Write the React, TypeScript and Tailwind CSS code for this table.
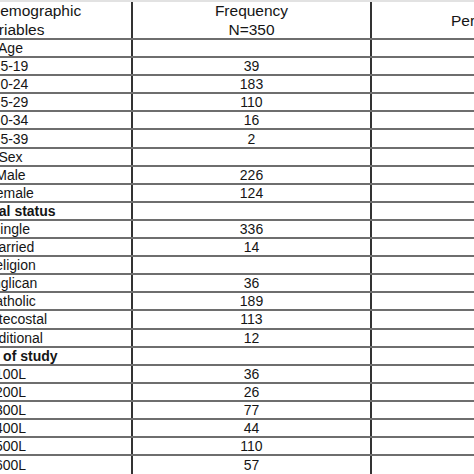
const rows: { label: string; freq?: string; bold?: boolean }[] = [
  { label: "Age" },
  { label: "15-19", freq: "39" },
  { label: "20-24", freq: "183" },
  { label: "25-29", freq: "110" },
  { label: "30-34", freq: "16" },
  { label: "35-39", freq: "2" },
  { label: "Sex" },
  { label: "Male", freq: "226" },
  { label: "Female", freq: "124" },
  { label: "Marital status", bold: true },
  { label: "Single", freq: "336" },
  { label: "Married", freq: "14" },
  { label: "Religion" },
  { label: "Anglican", freq: "36" },
  { label: "Catholic", freq: "189" },
  { label: "Pentecostal", freq: "113" },
  { label: "Traditional", freq: "12" },
  { label: "Level of study", bold: true },
  { label: "100L", freq: "36" },
  { label: "200L", freq: "26" },
  { label: "300L", freq: "77" },
  { label: "400L", freq: "44" },
  { label: "500L", freq: "110" },
  { label: "600L", freq: "57" },
];

export default function App() {
  return (
    <div
      className="w-[474px] h-[474px] overflow-hidden bg-white text-[#151515]"
      style={{ fontFamily: '"Liberation Sans", Arial, sans-serif' }}
    >
      {/* header */}
      <div className="flex h-[40px] border-t-2 border-b-2 border-t-[#e2e2e2] border-b-[#6e6e6e] text-[15.5px] leading-[19px]">
        <div className="ml-[-110px] w-[243px] shrink-0 border-r-2 border-[#333] pl-[99px] flex flex-col justify-center whitespace-nowrap">
          <span>Demographic</span>
          <span className="ml-[-8px]">Variables</span>
        </div>
        <div className="w-[239px] shrink-0 border-r-2 border-[#333] flex flex-col justify-center items-center">
          <span>Frequency</span>
          <span>N=350</span>
        </div>
        <div className="flex-1 flex items-center pl-[79px] whitespace-nowrap">Percentage (%)</div>
      </div>

      {rows.map((r, i) => (
        <div
          key={r.label}
          className={
            "flex h-[18.1px] text-[14px] leading-none " +
            (i < rows.length - 1 ? "border-b-2 border-[#6e6e6e]" : "")
          }
        >
          <div
            className={
              "ml-[-110px] w-[243px] shrink-0 border-r-2 border-[#333] flex items-center justify-center whitespace-nowrap " +
              (r.bold ? "font-bold" : "")
            }
          >
            {r.label}
          </div>
          <div className="w-[239px] shrink-0 border-r-2 border-[#333] flex items-center justify-center">
            {r.freq}
          </div>
          <div className="flex-1" />
        </div>
      ))}
    </div>
  );
}
